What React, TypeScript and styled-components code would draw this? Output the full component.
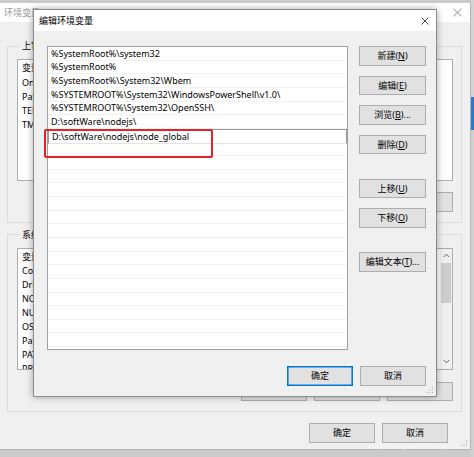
import React from "react";
import styled, { createGlobalStyle } from "styled-components";

const FONT = `"Noto Sans", "Noto Sans CJK SC", sans-serif`;

const GlobalStyle = createGlobalStyle`
  html, body { margin: 0; padding: 0; background: #cbcbcb; overflow: hidden; }
  body { font-family: ${FONT}; font-size: 9px; color: #000; }
  * { box-sizing: border-box; }
`;

const Desktop = styled.div`
  position: relative;
  width: 474px;
  height: 457px;
  display: flex;
  background: #cbcbcb;
  overflow: hidden;
`;

const OuterWindow = styled.div`
  width: 471px;
  height: 447px;
  margin-top: 3px;
  flex-shrink: 0;
  background: #f0f0f0;
  border-right: 1px solid #b4b4b4;
  border-bottom: 1px solid #b4b4b4;
  display: flex;
  flex-direction: column;
  position: relative;
`;

const RightStrip = styled.div`
  flex: 1;
  display: flex;
  flex-direction: column;
`;

const StripPart = styled.div<{ $h?: number; $c: string }>`
  ${(p) => (p.$h ? `height: ${p.$h}px; flex-shrink: 0;` : "flex: 1;")}
  background: ${(p) => p.$c};
`;

const OuterTitleBar = styled.div`
  height: 19px;
  flex-shrink: 0;
  background: #fff;
  display: flex;
  align-items: center;
  justify-content: space-between;
  padding: 0 8px 0 4px;
  color: #9a9a9a;
  font-size: 9px;
`;

const OuterBody = styled.div`
  flex: 1;
  display: flex;
  flex-direction: column;
  padding: 18px 8px 0 7px;
`;

const Group = styled.fieldset<{ $mt?: number }>`
  margin: ${(p) => p.$mt ?? 0}px 0 0 0;
  padding: 0 8px 10px 9px;
  border: 1px solid #dcdcdc;
  min-width: 0;
  display: flex;
  flex-direction: column;
`;

const Legend = styled.legend`
  padding: 0 2px;
  margin-left: 3px;
  font-size: 9px;
  line-height: 12px;
  color: #000;
`;

const ListView = styled.div`
  margin-top: 7px;
  height: 122px;
  background: #fff;
  border: 1px solid #adadad;
  display: flex;
  overflow: hidden;
`;

const ListColumn = styled.div`
  flex: 1;
  min-width: 0;
  display: flex;
  flex-direction: column;
`;

const ListRow = styled.div<{ $header?: boolean }>`
  height: ${(p) => (p.$header ? 15 : 14)}px;
  flex-shrink: 0;
  display: flex;
  align-items: center;
  padding-left: 4px;
  font-size: 9px;
  white-space: nowrap;
`;

const NameCell = styled.span`
  width: 110px;
  flex-shrink: 0;
  overflow: hidden;
`;

const ScrollBar = styled.div`
  width: 12px;
  flex-shrink: 0;
  background: #f0f0f0;
  display: flex;
  flex-direction: column;
`;

const ScrollArrow = styled.div`
  height: 14px;
  flex-shrink: 0;
  display: flex;
  align-items: center;
  justify-content: center;
`;

const ScrollThumb = styled.div`
  height: 40px;
  flex-shrink: 0;
  margin: 0 1px;
  background: #cdcdcd;
`;

const ScrollTrack = styled.div`
  flex: 1;
`;

const ButtonRow = styled.div<{ $mt: number; $pr?: number }>`
  margin-top: ${(p) => p.$mt}px;
  display: flex;
  justify-content: flex-end;
  gap: 7px;
  padding-right: ${(p) => p.$pr ?? 0}px;
`;

const Button = styled.button<{ $w?: number; $default?: boolean }>`
  width: ${(p) => p.$w ?? 66}px;
  height: 19.5px;
  flex-shrink: 0;
  padding: 0;
  margin: 0;
  display: flex;
  align-items: center;
  justify-content: center;
  background: #e1e1e1;
  border: 1px solid ${(p) => (p.$default ? "#0078d7" : "#adadad")};
  box-shadow: ${(p) => (p.$default ? "inset 0 0 0 0.6px #0078d7" : "none")};
  font-family: ${FONT};
  font-size: 9px;
  color: #000;
  white-space: nowrap;
`;

const Key = styled.span`
  text-decoration: underline;
  text-underline-offset: 1px;
`;

const Grip = styled.div`
  position: absolute;
  right: 2px;
  bottom: 2px;
  width: 8px;
  height: 8px;
  display: flex;
`;

const Watermark = styled.div`
  position: absolute;
  right: 12px;
  bottom: -1px;
  font-size: 7px;
  color: rgba(255, 255, 255, 0.6);
  font-family: ${FONT};
`;

/* ---------- front dialog ---------- */

const Dialog = styled.div`
  position: absolute;
  left: 33px;
  top: 9px;
  width: 404px;
  height: 388px;
  background: #f0f0f0;
  border: 1px solid #8c8c8c;
  box-shadow: 0 0 7px rgba(0, 0, 0, 0.35);
  display: flex;
  flex-direction: column;
`;

const DialogTitleBar = styled.div`
  height: 21px;
  flex-shrink: 0;
  background: #fff;
  display: flex;
  align-items: center;
  justify-content: space-between;
  padding: 0 7px 0 5px;
  font-size: 9px;
  color: #000;
`;

const DialogBody = styled.div`
  flex: 1;
  display: flex;
  flex-direction: column;
  padding: 15px 10px 0 13px;
`;

const DialogMain = styled.div`
  display: grid;
  grid-template-columns: 301px 67px;
  column-gap: 11px;
`;

const PathList = styled.div`
  height: 304px;
  background: #fff;
  border: 1px solid #a0a0a0;
  overflow: hidden;
  display: flex;
  flex-direction: column;
`;

const PathRow = styled.div`
  height: 13.65px;
  flex-shrink: 0;
  border-bottom: 1px solid #f2f2f2;
  display: flex;
  align-items: center;
  padding-left: 3px;
  font-size: 9px;
  white-space: nowrap;
`;

const EditBox = styled.div`
  height: 15px;
  flex-shrink: 0;
  margin-bottom: -1.35px;
  background: #fff;
  border: 1px solid #9a9a9a;
  border-bottom-color: #e4e4e4;
  display: flex;
  align-items: center;
  padding-left: 3px;
  font-size: 9px;
  white-space: nowrap;
  position: relative;
  z-index: 1;
`;

const ButtonColumn = styled.div`
  display: flex;
  flex-direction: column;
  gap: 24.5px;
`;

const ButtonStack = styled.div`
  display: flex;
  flex-direction: column;
  gap: 10px;
`;

const DialogFooter = styled.div`
  margin-top: 16px;
  display: flex;
  justify-content: flex-end;
  gap: 7px;
`;

const Highlight = styled.div`
  position: absolute;
  z-index: 2;
  left: 10px;
  top: 119px;
  width: 169px;
  height: 29px;
  border: 2px solid #e3232a;
  border-radius: 2px;
  pointer-events: none;
`;

const CloseIcon = ({ color, size = 8 }: { color: string; size?: number }) => (
  <svg width={size} height={size} viewBox="0 0 8 8">
    <path d="M0.5 0.5 L7.5 7.5 M7.5 0.5 L0.5 7.5" stroke={color} strokeWidth="0.9" fill="none" />
  </svg>
);

const Chevron = ({ up }: { up?: boolean }) => (
  <svg width="7" height="5" viewBox="0 0 7 5">
    <path
      d={up ? "M0.8 4 L3.5 1.2 L6.2 4" : "M0.8 1 L3.5 3.8 L6.2 1"}
      stroke="#606060"
      strokeWidth="1"
      fill="none"
    />
  </svg>
);

const GripIcon = () => (
  <svg width="8" height="8" viewBox="0 0 8 8">
    {[
      [6.5, 1.5],
      [6.5, 4],
      [4, 4],
      [6.5, 6.5],
      [4, 6.5],
      [1.5, 6.5],
    ].map(([cx, cy], i) => (
      <rect key={i} x={cx - 0.5} y={cy - 0.5} width="1" height="1" fill="#b0b0b0" />
    ))}
  </svg>
);

const userVars = ["OneDrive", "Path", "TEMP", "TMP"];

const sysVars = [
  "ComSpec",
  "DriverData",
  "NODE_PATH",
  "NUMBER_OF_PROCESSORS",
  "OS",
  "Path",
  "PATHEXT",
  "PROCESSOR_ARCHITECTURE",
];

const paths = [
  "%SystemRoot%\\system32",
  "%SystemRoot%",
  "%SystemRoot%\\System32\\Wbem",
  "%SYSTEMROOT%\\System32\\WindowsPowerShell\\v1.0\\",
  "%SYSTEMROOT%\\System32\\OpenSSH\\",
  "D:\\softWare\\nodejs\\",
];

const GroupButtons = ({ mt }: { mt: number }) => (
  <ButtonRow $mt={mt}>
    <Button>
      新建(<Key>W</Key>)...
    </Button>
    <Button>
      编辑(<Key>I</Key>)...
    </Button>
    <Button>
      删除(<Key>L</Key>)
    </Button>
  </ButtonRow>
);

export default function App() {
  const emptyRows = Array.from({ length: 16 });
  return (
    <>
      <GlobalStyle />
      <Desktop>
        <OuterWindow>
          <OuterTitleBar>
            <span>环境变量</span>
            <CloseIcon color="#a8a8a8" size={9} />
          </OuterTitleBar>
          <OuterBody>
            <Group>
              <Legend>
                上官的用户变量(<Key>U</Key>)
              </Legend>
              <ListView>
                <ListColumn>
                  <ListRow $header>
                    <NameCell>变量</NameCell>
                  </ListRow>
                  {userVars.map((n) => (
                    <ListRow key={n}>
                      <NameCell>{n}</NameCell>
                    </ListRow>
                  ))}
                </ListColumn>
              </ListView>
              <GroupButtons mt={11} />
            </Group>
            <Group $mt={6}>
              <Legend>
                系统变量(<Key>S</Key>)
              </Legend>
              <ListView>
                <ListColumn>
                  <ListRow $header>
                    <NameCell>变量</NameCell>
                  </ListRow>
                  {sysVars.map((n) => (
                    <ListRow key={n}>
                      <NameCell>{n}</NameCell>
                    </ListRow>
                  ))}
                </ListColumn>
                <ScrollBar>
                  <ScrollArrow>
                    <Chevron up />
                  </ScrollArrow>
                  <ScrollThumb />
                  <ScrollTrack />
                  <ScrollArrow>
                    <Chevron />
                  </ScrollArrow>
                </ScrollBar>
              </ListView>
              <GroupButtons mt={12} />
            </Group>
            <ButtonRow $mt={11} $pr={14}>
              <Button>确定</Button>
              <Button>取消</Button>
            </ButtonRow>
          </OuterBody>
          <Grip>
            <GripIcon />
          </Grip>
          <Watermark>https://blog.csdn.net/qq_41</Watermark>
        </OuterWindow>
        <RightStrip>
          <StripPart $h={97} $c="#d4d4d4" />
          <StripPart $h={33} $c="#2f79c2" />
          <StripPart $c="#d0d0d0" />
        </RightStrip>

        <Dialog>
          <DialogTitleBar>
            <span>编辑环境变量</span>
            <CloseIcon color="#333" />
          </DialogTitleBar>
          <DialogBody>
            <DialogMain>
              <PathList>
                {paths.map((p) => (
                  <PathRow key={p}>{p}</PathRow>
                ))}
                <EditBox>D:\softWare\nodejs\node_global</EditBox>
                {emptyRows.map((_, i) => (
                  <PathRow key={i} />
                ))}
              </PathList>
              <ButtonColumn>
                <ButtonStack>
                  <Button $w={67}>
                    新建(<Key>N</Key>)
                  </Button>
                  <Button $w={67}>
                    编辑(<Key>E</Key>)
                  </Button>
                  <Button $w={67}>
                    浏览(<Key>B</Key>)...
                  </Button>
                  <Button $w={67}>
                    删除(<Key>D</Key>)
                  </Button>
                </ButtonStack>
                <ButtonStack>
                  <Button $w={67}>
                    上移(<Key>U</Key>)
                  </Button>
                  <Button $w={67}>
                    下移(<Key>O</Key>)
                  </Button>
                </ButtonStack>
                <ButtonStack>
                  <Button $w={67}>
                    编辑文本(<Key>T</Key>)...
                  </Button>
                </ButtonStack>
              </ButtonColumn>
            </DialogMain>
            <DialogFooter>
              <Button $default>确定</Button>
              <Button>取消</Button>
            </DialogFooter>
          </DialogBody>
          <Grip>
            <GripIcon />
          </Grip>
          <Highlight />
        </Dialog>
      </Desktop>
    </>
  );
}
